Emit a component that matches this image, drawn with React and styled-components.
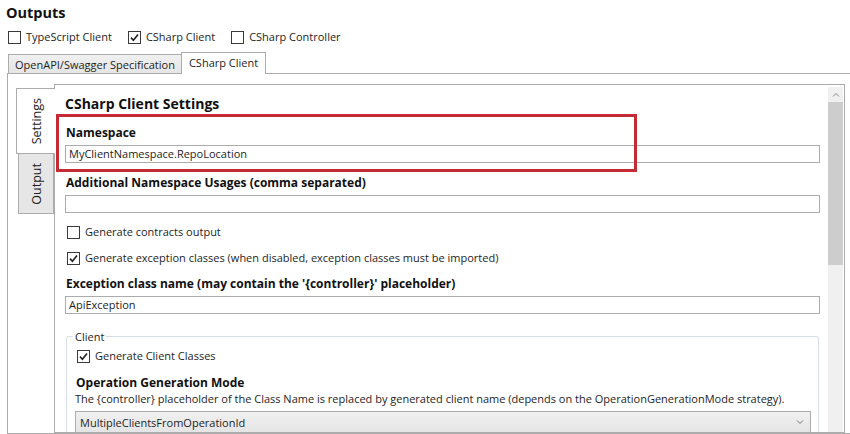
import React from "react";
import styled, { createGlobalStyle } from "styled-components";

const GlobalStyle = createGlobalStyle`
  html, body {
    margin: 0;
    padding: 0;
    background: #ffffff;
    overflow: hidden;
  }
  body {
    font-family: "Open Sans", "Noto Sans", sans-serif;
    font-size: 11px;
    color: #1e1e1e;
  }
`;

const CheckMark = () => (
  <svg width="11" height="11" viewBox="0 0 11 11">
    <path d="M2 5.6 L4.4 8.2 L9 2.4" fill="none" stroke="#222" strokeWidth="1.6" />
  </svg>
);

const Check = ({ checked, children }) => (
  <S.CheckRow>
    <S.Box>{checked && <CheckMark />}</S.Box>
    <span>{children}</span>
  </S.CheckRow>
);

const App = () => {
  return (
    <>
      <GlobalStyle />
      <S.Page>
        <S.Title>Outputs</S.Title>
        <S.OutputRow>
          <Check>TypeScript Client</Check>
          <Check checked>CSharp Client</Check>
          <Check>CSharp Controller</Check>
        </S.OutputRow>

        <S.TabStrip>
          <S.Tab>OpenAPI/Swagger Specification</S.Tab>
          <S.Tab active>CSharp Client</S.Tab>
        </S.TabStrip>

        <S.TabPanel>
          <S.SideTabs>
            <S.SideTab active>
              <S.SideLabel>Settings</S.SideLabel>
            </S.SideTab>
            <S.SideTab>
              <S.SideLabel>Output</S.SideLabel>
            </S.SideTab>
          </S.SideTabs>

          <S.Inner>
            <S.Scroll>
              <S.Heading>CSharp Client Settings</S.Heading>

              <S.Label top={11}>Namespace</S.Label>
              <S.Input>MyClientNamespace.RepoLocation</S.Input>

              <S.Label top={12}>Additional Namespace Usages (comma separated)</S.Label>
              <S.Input />

              <S.Spaced top={11}>
                <Check>Generate contracts output</Check>
              </S.Spaced>
              <S.Spaced top={10}>
                <Check checked>
                  Generate exception classes (when disabled, exception classes must be imported)
                </Check>
              </S.Spaced>

              <S.Label top={10}>Exception class name (may contain the '{"{controller}"}' placeholder)</S.Label>
              <S.Input>ApiException</S.Input>

              <S.Group>
                <S.Legend>Client</S.Legend>
                <S.Spaced top={3}>
                  <Check checked>Generate Client Classes</Check>
                </S.Spaced>
                <S.Label top={11}>Operation Generation Mode</S.Label>
                <S.Hint>
                  The {"{controller}"} placeholder of the Class Name is replaced by generated client name (depends on the
                  OperationGenerationMode strategy).
                </S.Hint>
                <S.Select>
                  <span>MultipleClientsFromOperationId</span>
                  <svg width="8" height="6" viewBox="0 0 8 6">
                    <path d="M1 1.5 L4 4.5 L7 1.5" fill="none" stroke="#777" strokeWidth="1" />
                  </svg>
                </S.Select>
              </S.Group>
            </S.Scroll>

            <S.ScrollBar>
              <S.ArrowUp>
                <svg width="8" height="6" viewBox="0 0 8 6">
                  <path d="M1 4.5 L4 1.5 L7 4.5" fill="none" stroke="#8a8a8a" strokeWidth="1" />
                </svg>
              </S.ArrowUp>
              <S.Thumb />
            </S.ScrollBar>

            <S.Highlight />
          </S.Inner>
        </S.TabPanel>
      </S.Page>
    </>
  );
};

export default App;

const S = {
  Page: styled.div`
    width: 870px;
    height: 434px;
    padding: 0 0 0 7px;
    box-sizing: border-box;
    display: flex;
    flex-direction: column;
  `,

  Title: styled.div`
    font-weight: 700;
    font-size: 14.5px;
    line-height: 20px;
    margin-top: 3px;
    margin-left: -1px;
    color: #111;
  `,

  OutputRow: styled.div`
    display: flex;
    gap: 16px;
    margin-top: 6px;
    margin-left: 1px;
  `,

  CheckRow: styled.div`
    display: flex;
    align-items: center;
    gap: 5px;
    height: 16px;
    line-height: 16px;
    white-space: nowrap;
  `,

  Box: styled.div`
    width: 13px;
    height: 13px;
    box-sizing: border-box;
    border: 1px solid #3a3a3a;
    background: #fff;
    display: flex;
    align-items: center;
    justify-content: center;
    flex-shrink: 0;
  `,

  TabStrip: styled.div`
    display: flex;
    align-items: flex-end;
    height: 22px;
    margin-top: 7px;
    margin-left: 1px;
    position: relative;
    z-index: 2;
    margin-bottom: -1px;
  `,

  Tab: styled.div`
    box-sizing: border-box;
    height: ${({ active }) => (active ? "22px" : "20px")};
    padding: 0 ${({ active }) => (active ? "7px" : "6px")};
    line-height: ${({ active }) => (active ? "20px" : "19px")};
    border: 1px solid #acacac;
    border-bottom: ${({ active }) => (active ? "none" : "1px solid #acacac")};
    margin-left: ${({ active }) => (active ? "-1px" : "0")};
    background: ${({ active }) => (active ? "#ffffff" : "linear-gradient(#f0f0f0, #e5e5e5)")};
    white-space: nowrap;
  `,

  TabPanel: styled.div`
    flex: 1;
    border: 1px solid #acacac;
    background: #fff;
    display: flex;
    padding: 10px 24px 0 9px;
    min-height: 0;
  `,

  SideTabs: styled.div`
    width: 38px;
    display: flex;
    flex-direction: column;
    align-items: flex-end;
    padding-top: 4px;
    position: relative;
    z-index: 2;
    margin-right: -1px;
  `,

  SideTab: styled.div`
    box-sizing: border-box;
    flex-shrink: 0;
    width: ${({ active }) => (active ? "39px" : "36px")};
    height: ${({ active }) => (active ? "66px" : "61px")};
    border: 1px solid #acacac;
    border-right: ${({ active }) => (active ? "none" : "1px solid #acacac")};
    background: ${({ active }) => (active ? "#ffffff" : "#e6e6e6")};
    margin-right: ${({ active }) => (active ? "0" : "1px")};
    margin-top: ${({ active }) => (active ? "0" : "-1px")};
    display: flex;
    align-items: center;
    justify-content: center;
  `,

  SideLabel: styled.span`
    writing-mode: vertical-rl;
    transform: rotate(180deg);
    font-size: 12.5px;
    color: #222;
  `,

  Inner: styled.div`
    flex: 1;
    border: 1px solid #acacac;
    display: flex;
    position: relative;
    min-width: 0;
    overflow: hidden;
  `,

  Scroll: styled.div`
    flex: 1;
    padding: 9px 8px 0 10px;
    display: flex;
    flex-direction: column;
    min-width: 0;

    & > * {
      flex-shrink: 0;
    }
  `,

  Heading: styled.div`
    font-weight: 700;
    font-size: 14px;
    line-height: 20px;
    color: #111;
  `,

  Label: styled.div`
    font-weight: 700;
    font-size: 12px;
    line-height: 16px;
    margin-top: ${({ top }) => top}px;
    margin-left: 1px;
    white-space: nowrap;
    color: #111;
  `,

  Input: styled.div`
    box-sizing: border-box;
    height: 18px;
    margin-top: 4px;
    border: 1px solid #acacac;
    padding: 0 3px;
    line-height: 16px;
    background: #fff;
    white-space: nowrap;
  `,

  Spaced: styled.div`
    margin-top: ${({ top }) => top}px;
    margin-left: 2px;
  `,

  Group: styled.div`
    margin-top: 22px;
    margin-left: 1px;
    margin-right: 1px;
    border: 1px solid #d5dfe5;
    border-bottom: none;
    border-radius: 3px 3px 0 0;
    padding: 0 7px 0 8px;
    display: flex;
    flex-direction: column;

    & > * {
      flex-shrink: 0;
    }
  `,

  Legend: styled.div`
    align-self: flex-start;
    margin-top: -8px;
    margin-left: -2px;
    padding: 0 2px;
    background: #fff;
    line-height: 16px;
  `,

  Hint: styled.div`
    line-height: 16px;
    white-space: nowrap;
  `,

  Select: styled.div`
    box-sizing: border-box;
    height: 22px;
    margin-top: 4px;
    border: 1px solid #acacac;
    background: linear-gradient(#f0f0f0, #e5e5e5);
    display: flex;
    align-items: center;
    justify-content: space-between;
    padding: 0 6px 0 4px;
  `,

  ScrollBar: styled.div`
    width: 15px;
    margin: 2px 1px 0 0;
    background: #f0f0f0;
    display: flex;
    flex-direction: column;
    align-items: center;
    flex-shrink: 0;
  `,

  ArrowUp: styled.div`
    height: 15px;
    width: 15px;
    display: flex;
    align-items: center;
    justify-content: center;
  `,

  Thumb: styled.div`
    width: 15px;
    height: 163px;
    background: #cdcdcd;
  `,

  Highlight: styled.div`
    position: absolute;
    left: 1px;
    top: 29px;
    width: 581px;
    height: 58px;
    box-sizing: border-box;
    border: 3px solid #c42b34;
    pointer-events: none;
  `,
};
